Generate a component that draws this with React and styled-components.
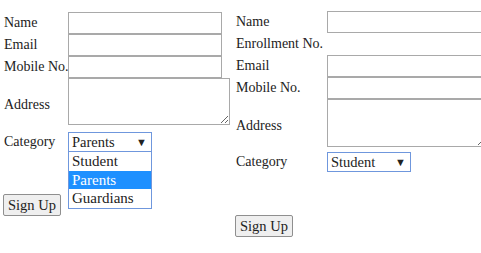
import React from 'react';
import styled, { createGlobalStyle } from 'styled-components';

const GlobalStyle = createGlobalStyle`
  body {
    margin: 0;
    background: #ffffff;
    font-family: "Liberation Serif", "Times New Roman", serif;
    font-size: 14px;
    color: #222;
  }
`;

const Page = styled.div`
  display: flex;
  align-items: flex-start;
  gap: 5px;
  padding-left: 3px;
  width: 481px;
  height: 253px;
  overflow: hidden;
  box-sizing: border-box;
`;

const Form = styled.form`
  display: flex;
  flex-direction: column;
  align-items: flex-start;
  padding-top: ${props => props.top}px;
  flex: ${props => (props.grow ? 1 : 'none')};
  min-width: 0;
`;

const Grid = styled.div`
  display: grid;
  grid-template-columns: ${props => props.labelWidth}px auto;
  align-items: center;
`;

const Label = styled.label`
  padding-left: 1px;
  line-height: 16px;
  white-space: nowrap;
  margin-top: ${props => props.gap || 0}px;
  padding-top: ${props => props.drop || 0}px;
`;

const Cell = styled.div`
  display: flex;
  align-items: center;
  min-height: 22px;
  margin-top: ${props => props.gap || 0}px;
`;

const TextInput = styled.input`
  box-sizing: border-box;
  width: ${props => props.w}px;
  height: 22px;
  margin: 0;
  border: 1px solid #a9a9a9;
  padding: 1px 2px;
  font: inherit;
  background: #fff;
`;

const TextArea = styled.textarea`
  box-sizing: border-box;
  display: block;
  width: ${props => props.w}px;
  height: ${props => props.h}px;
  margin: 0;
  border: 1px solid #a9a9a9;
  font: inherit;
  background: #fff;
`;

const SelectWrap = styled.div`
  position: relative;
  width: 84px;
`;

const SelectBox = styled.div`
  box-sizing: border-box;
  height: 20px;
  border: 1px solid #6f97dd;
  display: flex;
  align-items: center;
  justify-content: space-between;
  padding: 0 4px 0 3px;
  background: #fff;
  font-size: 14.5px;
  color: #222;
`;

const Arrow = styled.span`
  font-size: 11px;
  color: #222;
`;

const ListBox = styled.ul`
  position: absolute;
  top: 19px;
  left: 0;
  right: 0;
  margin: 0;
  padding: 0;
  list-style: none;
  border: 1px solid #6f97dd;
  background: #fff;
  z-index: 5;
`;

const Option = styled.li`
  height: 18.5px;
  line-height: 18.5px;
  padding-left: 3px;
  font-size: 15px;
  background: ${props => (props.active ? '#1e90ff' : '#fff')};
  color: ${props => (props.active ? '#fff' : '#222')};
`;

const Button = styled.button`
  box-sizing: border-box;
  height: 22px;
  margin-top: ${props => props.gap}px;
  padding: 0 4px;
  border: 1px solid #8f8f8f;
  border-radius: 2px;
  background: #efefef;
  font: inherit;
  font-size: 14.5px;
  color: #222;
`;

const Select = ({ value, open, options }) => (
  <SelectWrap>
    <SelectBox>
      {value}
      <Arrow>▼</Arrow>
    </SelectBox>
    {open && (
      <ListBox>
        {options.map(o => (
          <Option key={o} active={o === value}>{o}</Option>
        ))}
      </ListBox>
    )}
  </SelectWrap>
);

const options = ['Student', 'Parents', 'Guardians'];

export default function App() {
  return (
    <>
      <GlobalStyle />
      <Page>
        <Form top={12}>
          <Grid labelWidth={65}>
            <Label>Name</Label>
            <Cell><TextInput w={154} /></Cell>
            <Label>Email</Label>
            <Cell><TextInput w={154} /></Cell>
            <Label>Mobile No.</Label>
            <Cell><TextInput w={154} /></Cell>
            <Label drop={6}>Address</Label>
            <Cell><TextArea w={162} h={47} /></Cell>
            <Label gap={6}>Category</Label>
            <Cell gap={6}><Select value="Parents" open options={options} /></Cell>
          </Grid>
          <Button gap={41}>Sign Up</Button>
        </Form>
        <Form top={11} grow>
          <Grid labelWidth={92}>
            <Label>Name</Label>
            <Cell><TextInput w={160} /></Cell>
            <Label>Enrollment No.</Label>
            <Cell />
            <Label>Email</Label>
            <Cell><TextInput w={160} /></Cell>
            <Label>Mobile No.</Label>
            <Cell><TextInput w={160} /></Cell>
            <Label drop={6}>Address</Label>
            <Cell><TextArea w={160} h={48} /></Cell>
            <Label gap={4}>Category</Label>
            <Cell gap={4}><Select value="Student" options={options} /></Cell>
          </Grid>
          <Button gap={42}>Sign Up</Button>
        </Form>
      </Page>
    </>
  );
}
